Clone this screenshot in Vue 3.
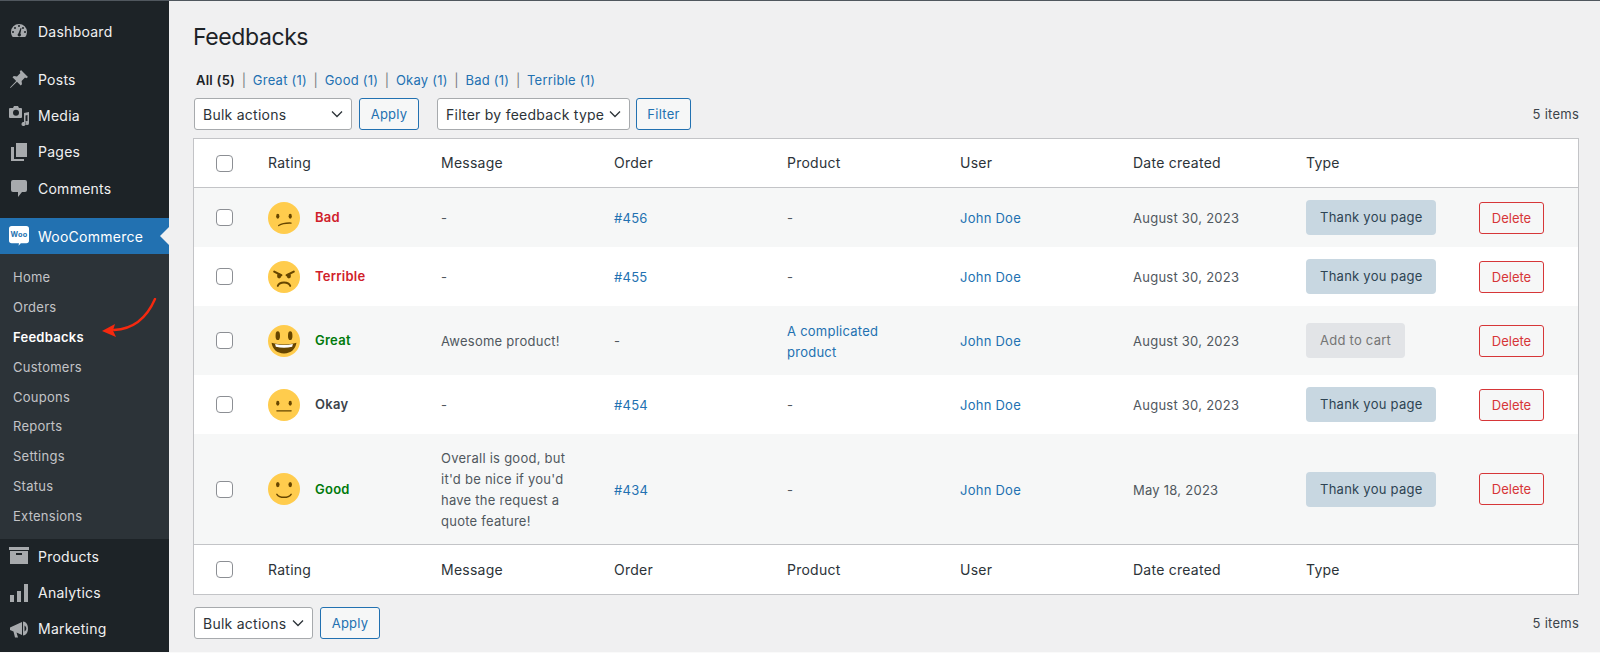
<script setup>
const topMenu = [
  { label: 'Posts', icon: 'pin' },
  { label: 'Media', icon: 'media' },
  { label: 'Pages', icon: 'pages' },
  { label: 'Comments', icon: 'comment' }
]
const sub = ['Home', 'Orders', 'Feedbacks', 'Customers', 'Coupons', 'Reports', 'Settings', 'Status', 'Extensions']
const lowMenu = [
  { label: 'Products', icon: 'box' },
  { label: 'Analytics', icon: 'bars' },
  { label: 'Marketing', icon: 'horn' }
]
const heads = ['Rating', 'Message', 'Order', 'Product', 'User', 'Date created', 'Type']
const filters = ['Great (1)', 'Good (1)', 'Okay (1)', 'Bad (1)', 'Terrible (1)']
const rows = [
  { mood: 'bad', label: 'Bad', tone: 'red', msg: ['-'], order: '#456', product: ['-'], date: 'August 30, 2023', type: 'Thank you page', h: 'h59' },
  { mood: 'terrible', label: 'Terrible', tone: 'red', msg: ['-'], order: '#455', product: ['-'], date: 'August 30, 2023', type: 'Thank you page', h: 'h59' },
  { mood: 'great', label: 'Great', tone: 'green', msg: ['Awesome product!'], order: '-', product: ['A complicated', 'product'], link: true, date: 'August 30, 2023', type: 'Add to cart', h: 'h69' },
  { mood: 'okay', label: 'Okay', tone: 'dark', msg: ['-'], order: '#454', product: ['-'], date: 'August 30, 2023', type: 'Thank you page', h: 'h59' },
  { mood: 'good', label: 'Good', tone: 'green', msg: ['Overall is good, but', "it'd be nice if you'd", 'have the request a', 'quote feature!'], order: '#434', product: ['-'], date: 'May 18, 2023', type: 'Thank you page', h: 'h110' }
]
</script>

<template>
  <div class="page">
    <aside class="side">
      <div class="menu first">
        <a class="item">
          <svg class="ic" viewBox="0 0 20 20"><path d="M3.76 16h12.48A7.96 7.96 0 0 0 18 11a8 8 0 1 0-16 0c0 1.900.66 3.640 1.760 5zM10 4a1 1 0 1 1 0 2 1 1 0 0 1 0-2zM6 6a1 1 0 1 1 0 2 1 1 0 0 1 0-2zm8 0a1 1 0 1 1 0 2 1 1 0 0 1 0-2zM4 10a1 1 0 1 1 0 2 1 1 0 0 1 0-2zm12 0a1 1 0 1 1 0 2 1 1 0 0 1 0-2zm-4.400-3 .9.3-1.100 5.200A1.700 1.700 0 1 1 8.600 14c0-.6.3-1.100.8-1.400z" fill-rule="evenodd"/></svg>
          Dashboard
        </a>
      </div>
      <div class="menu second">
        <a v-for="m in topMenu" :key="m.label" class="item">
          <svg class="ic" viewBox="0 0 20 20">
            <path v-if="m.icon === 'pin'" d="M12 1 19 8 17.300 9.300 16 8.600 12.600 12 13 15.200 11.700 16.500 8 12.800 1.500 19 1 18.500 7.200 12 3.500 8.300 4.800 7 8 7.400 11.400 4 10.700 2.700z"/>
            <path v-else-if="m.icon === 'media'" fill-rule="evenodd" d="M1 2h3l1-2h4l1 2h2a1 1 0 0 1 1 1v8a1 1 0 0 1-1 1H1a1 1 0 0 1-1-1V3a1 1 0 0 1 1-1zm6 1.700a3 3 0 1 0 0 6 3 3 0 0 0 0-6zM15 7l5-1v11a2 2 0 1 1-1.500-1.900V9l-2 .4V18a2 2 0 1 1-1.500-1.900z"/>
            <path v-else-if="m.icon === 'pages'" d="M7 1h11v14H7zM2 5h3v12h10v2H2z"/>
            <path v-else-if="m.icon === 'comment'" d="M4 2h12a2 2 0 0 1 2 2v8a2 2 0 0 1-2 2h-3l-4 5v-5H4a2 2 0 0 1-2-2V4a2 2 0 0 1 2-2z"/>
          </svg>
          {{ m.label }}
        </a>
      </div>
      <a class="woo">
        <svg class="woo-ic" viewBox="0 0 22 22">
          <path fill="#fff" d="M3 0h16a3 3 0 0 1 3 3v13a3 3 0 0 1-3 3h-6l-2.500 2.800L11 19H3a3 3 0 0 1-3-3V3a3 3 0 0 1 3-3z"/>
          <text x="11" y="12.500" text-anchor="middle" class="woo-t">Woo</text>
        </svg>
        WooCommerce
        <i class="notch"></i>
      </a>
      <div class="sub">
        <a v-for="s in sub" :key="s" :class="['sub-item', { on: s === 'Feedbacks' }]">{{ s }}</a>
      </div>
      <div class="menu low">
        <a v-for="m in lowMenu" :key="m.label" class="item">
          <svg class="ic" viewBox="0 0 20 20">
            <path v-if="m.icon === 'box'" d="M0 1h20v3H0zM1 5h18v13H1zm6 2v2h6V7z" fill-rule="evenodd"/>
            <path v-else-if="m.icon === 'bars'" d="M1 12h4v7H1zM8 8h4v11H8zM15 1h4v18h-4z"/>
            <path v-else-if="m.icon === 'horn'" d="M1 8.500 13 3v13L7.500 13.600 9 18.500H6L4.500 12.500 1 11zM14 2.500c3 0 5 3 5 7s-2 7-5 7zm1.500 4v6c1-.5 1.800-1.600 1.800-3s-.8-2.500-1.800-3z" fill-rule="evenodd"/>
          </svg>
          {{ m.label }}
        </a>
      </div>
      <svg class="arrow" viewBox="0 0 60 40">
        <path d="M53 1C46 17 34 31 12 32" fill="none" stroke="#f5290f" stroke-width="2.400" stroke-linecap="round"/>
        <path d="M0 33 13 26 11 32.500 14 39z" fill="#f5290f"/>
      </svg>
    </aside>

    <main class="main">
      <h1>Feedbacks</h1>
      <ul class="subsub">
        <li class="cur">All (5)</li>
        <li v-for="f in filters" :key="f"><span class="sep">|</span><a>{{ f }}</a></li>
      </ul>
      <div class="bar top">
        <div class="select w158">Bulk actions<svg viewBox="0 0 12 8"><path d="M1 1.500 6 6.500 11 1.500" fill="none" stroke="#2c3338" stroke-width="1.300"/></svg></div>
        <button class="btn w60">Apply</button>
        <div class="select w193 gap">Filter by feedback type<svg viewBox="0 0 12 8"><path d="M1 1.500 6 6.500 11 1.500" fill="none" stroke="#2c3338" stroke-width="1.300"/></svg></div>
        <button class="btn w55">Filter</button>
        <span class="count">5 items</span>
      </div>

      <table class="tbl">
        <colgroup>
          <col class="c0" /><col v-for="h in heads" :key="h" class="cn" /><col />
        </colgroup>
        <thead>
          <tr class="hr">
            <th class="chk"><span class="box"></span></th>
            <th v-for="h in heads" :key="h">{{ h }}</th>
            <th></th>
          </tr>
        </thead>
        <tbody>
          <tr v-for="r in rows" :key="r.mood" :class="r.h">
            <td class="chk"><span class="box"></span></td>
            <td class="ctl">
              <div class="rate">
                <svg class="emo" viewBox="0 0 36 36">
                  <circle cx="18" cy="18" r="18" fill="#ffcc4d" />
                  <template v-if="r.mood === 'bad'">
                    <ellipse cx="11" cy="16" rx="1.800" ry="2.800" fill="#664500" /><ellipse cx="25" cy="16" rx="1.800" ry="2.800" fill="#664500" />
                    <path d="M12 26.500c4-2.500 9-3 14-2.800" fill="none" stroke="#664500" stroke-width="1.500" stroke-linecap="round" />
                  </template>
                  <template v-else-if="r.mood === 'terrible'">
                    <path d="M7 12l8 4M29 12l-8 4" stroke="#664500" stroke-width="2.400" stroke-linecap="round" />
                    <ellipse cx="12.500" cy="17" rx="2.300" ry="2.800" fill="#664500" /><ellipse cx="23.500" cy="17" rx="2.300" ry="2.800" fill="#664500" />
                    <path d="M11 28c2-5 12-5 14 0" fill="none" stroke="#664500" stroke-width="2.200" stroke-linecap="round" />
                  </template>
                  <template v-else-if="r.mood === 'great'">
                    <ellipse cx="11" cy="12" rx="2.500" ry="5" fill="#664500" /><ellipse cx="25" cy="12" rx="2.500" ry="5" fill="#664500" />
                    <path d="M4 20c9 2.500 19 2.500 28 0-1 7-6 12-14 12S5 27 4 20z" fill="#664500" />
                    <path d="M8 21.500c6.500 1.500 13.500 1.500 20 0l-.8 3c-6 1.300-12.400 1.300-18.400 0z" fill="#fff" />
                  </template>
                  <template v-else-if="r.mood === 'okay'">
                    <ellipse cx="11" cy="16" rx="1.800" ry="2.800" fill="#664500" /><ellipse cx="25" cy="16" rx="1.800" ry="2.800" fill="#664500" />
                    <path d="M10 24.600h16" stroke="#664500" stroke-width="1.500" stroke-linecap="round" />
                  </template>
                  <template v-else>
                    <ellipse cx="11" cy="13" rx="2" ry="3" fill="#664500" /><ellipse cx="25" cy="13" rx="2" ry="3" fill="#664500" />
                    <path d="M10 24c3 4.500 13 4.500 16 0" fill="none" stroke="#664500" stroke-width="1.700" stroke-linecap="round" />
                  </template>
                </svg>
                <span :class="['lbl', r.tone]">{{ r.label }}</span>
              </div>
            </td>
            <td class="msg"><div v-for="l in r.msg" :key="l">{{ l }}</div></td>
            <td><a v-if="r.order !== '-'">{{ r.order }}</a><template v-else>-</template></td>
            <td class="prod">
              <template v-if="r.link"><a v-for="l in r.product" :key="l" class="blk">{{ l }}</a></template>
              <template v-else>-</template>
            </td>
            <td><a>John Doe</a></td>
            <td>{{ r.date }}</td>
            <td class="ctl"><span :class="['pill', { grey: r.type === 'Add to cart' }]">{{ r.type }}</span></td>
            <td class="ctl"><button class="del">Delete</button></td>
          </tr>
        </tbody>
        <tfoot>
          <tr class="fr">
            <th class="chk"><span class="box"></span></th>
            <th v-for="h in heads" :key="h">{{ h }}</th>
            <th></th>
          </tr>
        </tfoot>
      </table>

      <div class="bar bottom">
        <div class="select w119">Bulk actions<svg viewBox="0 0 12 8"><path d="M1 1.500 6 6.500 11 1.500" fill="none" stroke="#2c3338" stroke-width="1.300"/></svg></div>
        <button class="btn w60">Apply</button>
        <span class="count">5 items</span>
      </div>
    </main>
  </div>
</template>

<style>
html, body { margin: 0; padding: 0; background: #fafafa; overflow: hidden; }
</style>

<style scoped>
.page {
  display: flex;
  height: 652px;
  overflow: hidden;
  font-family: Inter, "Liberation Sans", sans-serif;
  color: #3c434a;
  font-size: 13px;
  letter-spacing: .25px;
  border-top: 1px solid #50575e;
  box-sizing: border-box;
  background: #f0f0f1;
}
a { color: #2271b1; text-decoration: none; }
.side {
  position: relative;
  width: 169px;
  flex: none;
  background: #1d2327;
  color: #f0f0f1;
  font-size: 14px;
  display: flex;
  flex-direction: column;
}
.menu { display: flex; flex-direction: column; }
.first { padding-top: 12px; height: 48px; }
.second { height: 157px; }
.item {
  display: flex;
  align-items: center;
  height: 36.400px;
  flex: none;
  color: #f0f0f1;
  padding-left: 9px;
  gap: 9px;
}
.first .item { height: 36px; }
.ic { width: 20px; height: 20px; fill: #a7aaad; flex: none; }
.woo {
  position: relative;
  display: flex;
  align-items: center;
  height: 36px;
  flex: none;
  background: #2271b1;
  color: #fff;
  padding-left: 9px;
  gap: 9px;
}
.woo-ic { width: 20px; height: 20px; flex: none; }
.woo-t { font: 700 8px Inter, sans-serif; fill: #2271b1; }
.notch {
  position: absolute;
  right: 0;
  top: 9px;
  border: 9px solid transparent;
  border-right-color: #f0f0f1;
  border-left-width: 0;
}
.sub {
  background: #2c3338;
  padding: 9px 0 8px;
  display: flex;
  flex-direction: column;
  height: 285px;
  box-sizing: border-box;
  flex: none;
}
.sub-item {
  height: 29.900px;
  line-height: 29.900px;
  padding-left: 13px;
  font-size: 13px;
  color: #c3c4c7;
  flex: none;
}
.sub-item.on { color: #fff; font-weight: 600; }
.low { margin-top: -1px; }
.arrow { position: absolute; left: 102px; top: 297px; width: 60px; height: 40px; }

.main { flex: 1; min-width: 0; padding: 0 21px 0 24px; }
h1 {
  margin: 0;
  padding-top: 22px;
  font-size: 23px;
  line-height: 29px;
  font-weight: 400;
  color: #1d2327;
  height: 49px;
  letter-spacing: -.4px;
}
.subsub {
  list-style: none;
  margin: -1px 0 0;
  padding: 0 0 0 3px;
  display: flex;
  height: 18px;
  line-height: 18px;
  font-size: 13px;
}
.cur { color: #1d2327; font-weight: 600; }
.sep { color: #787c82; padding: 0 6.500px; }
.bar { display: flex; align-items: center; }
.top { margin-top: 9px; height: 32px; }
.bottom { margin-top: 12px; height: 32px; }
.select {
  box-sizing: border-box;
  height: 32px;
  background: #fff;
  border: 1px solid #a7aaad;
  border-radius: 3px;
  color: #2c3338;
  font-size: 14px;
  display: flex;
  align-items: center;
  justify-content: space-between;
  padding: 0 8px;
  margin-left: 1px;
}
.select svg { width: 12px; height: 8px; flex: none; }
.w158 { width: 158px; }
.w193 { width: 193px; }
.w119 { width: 119px; }
.gap { margin-left: 18px; }
.btn {
  box-sizing: border-box;
  height: 32px;
  margin-left: 7px;
  background: #f6f7f7;
  border: 1px solid #2271b1;
  border-radius: 3px;
  color: #2271b1;
  font: 13px Inter, sans-serif;
  letter-spacing: .25px;
  padding: 0;
}
.w60 { width: 60px; }
.w55 { width: 55px; margin-left: 6px; }
.count { margin-left: auto; color: #3c434a; font-size: 13px; }
.tbl {
  margin-top: 8px;
  width: 1386px;
  table-layout: fixed;
  border-collapse: separate;
  border-spacing: 0;
  background: #fff;
  border: 1px solid #c3c4c7;
  box-sizing: border-box;
}
.c0 { width: 64px; }
.cn { width: 173px; }
th {
  font-weight: 400;
  font-size: 14px;
  color: #2c3338;
  text-align: left;
  padding: 0 10px;
}
.hr th { height: 46px; padding-bottom: 2px; border-bottom: 1px solid #c3c4c7; }
.hr th.chk { padding-bottom: 0; height: 48px; }
.fr th { height: 49px; border-top: 1px solid #c3c4c7; }
td { padding: 2px 10px 0; height: 57px; vertical-align: middle; color: #50575e; font-size: 13px; line-height: 20.500px; box-sizing: border-box; }
td.ctl { padding-top: 0; }
.h59 td { height: 59px; }
.h69 td { height: 69px; }
.h110 td { height: 110px; }
.msg div { line-height: 20.800px; }
tbody tr:nth-child(odd) td { background: #f6f7f7; }
td.chk, th.chk { padding: 0 0 0 22px; }
.box {
  display: block;
  box-sizing: border-box;
  width: 17px;
  height: 17px;
  background: #fff;
  border: 1px solid #8c8f94;
  border-radius: 4px;
}
.rate { display: flex; align-items: center; gap: 15px; }
.emo { width: 32px; height: 32px; flex: none; }
.lbl { font-weight: 600; font-size: 13px; }
.red { color: #d0202a; }
.green { color: #007a0c; }
.dark { color: #3c434a; }
.blk { display: block; }
.pill {
  display: inline-block;
  height: 35px;
  line-height: 35px;
  padding: 0 14px;
  background: #c8d7e1;
  color: #2e4453;
  border-radius: 4px;
  font-size: 13px;
  white-space: nowrap;
  vertical-align: middle;
}
.pill.grey { background: #e2e4e7; color: #757575; }
.del {
  box-sizing: border-box;
  width: 65px;
  height: 32px;
  background: #f6f7f7;
  border: 1px solid #d63638;
  border-radius: 3px;
  color: #d63638;
  font: 13px Inter, sans-serif;
  padding: 0;
  display: block;
}
</style>
